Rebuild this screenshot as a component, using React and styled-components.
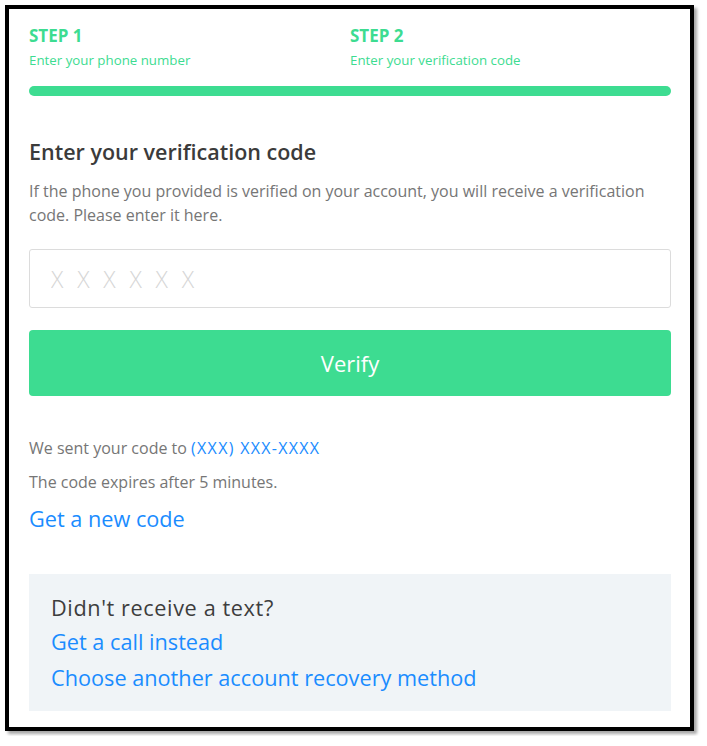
import React from "react";
import styled, { createGlobalStyle } from "styled-components";

const GlobalStyle = createGlobalStyle`
  * { box-sizing: border-box; }
  body {
    margin: 0;
    background: #fff;
    font-family: "Open Sans", Lato, sans-serif;
  }
`;

const Page = styled.div`
  padding: 5px;
`;

const Frame = styled.div`
  width: 689px;
  height: 726px;
  border: 4px solid #000;
  box-shadow: 3px 3px 3px rgba(0, 0, 0, 0.35);
  padding: 17px 19px 0 20px;
  background: #fff;
`;

const Steps = styled.div`
  display: grid;
  grid-template-columns: 1fr 1fr;
`;

const Step = styled.div`
  display: flex;
  flex-direction: column;
  gap: 5px;
`;

const StepTitle = styled.div`
  font-size: 17px;
  line-height: 20px;
  font-weight: 700;
  color: #3ddc91;
`;

const StepHint = styled.div`
  font-size: 13.3px;
  line-height: 18px;
  color: #3ddc91;
`;

const Progress = styled.div`
  margin-top: 17px;
  height: 10px;
  border-radius: 5px;
  background: #3ddc91;
`;

const Heading = styled.h2`
  margin: 43px 0 0;
  font-size: 21.5px;
  line-height: 26px;
  font-weight: 600;
  color: #3b3b3b;
`;

const Intro = styled.p`
  margin: 14px 0 0;
  font-size: 16px;
  line-height: 24px;
  color: #767676;
`;

const CodeInput = styled.input`
  display: block;
  width: 100%;
  height: 59px;
  margin-top: 22px;
  padding: 0 21px;
  border: 1px solid #dcdcdc;
  border-radius: 3px;
  font-family: inherit;
  font-size: 23px;
  font-weight: 300;
  letter-spacing: 3.9px;
  color: #333;
  outline: none;
  &::placeholder {
    color: #d6d6d6;
  }
`;

const VerifyButton = styled.button`
  display: block;
  width: 100%;
  height: 66px;
  margin-top: 22px;
  border: none;
  border-radius: 4px;
  background: #3ddc91;
  color: #fff;
  font-family: inherit;
  font-size: 22px;
  cursor: pointer;
`;

const Info = styled.p`
  margin: ${(p) => p.$top}px 0 0;
  font-size: 16px;
  line-height: 22px;
  color: #767676;
`;

const Link = styled.a`
  color: #1a8cff;
  text-decoration: none;
  cursor: pointer;
`;

const Phone = styled(Link)`
  letter-spacing: 1.3px;
`;

const BigLink = styled(Link)`
  display: block;
  margin-top: ${(p) => p.$top}px;
  font-size: 21.7px;
  line-height: 28px;
`;

const HelpBox = styled.div`
  margin-top: 41px;
  padding: 20px 22px 19px;
  background: #f0f4f7;
`;

const HelpTitle = styled.div`
  font-size: 21.7px;
  line-height: 28px;
  letter-spacing: 0.6px;
  color: #3d3d3d;
`;

export default function App() {
  return (
    <Page>
      <GlobalStyle />
      <Frame>
        <Steps>
          <Step>
            <StepTitle>STEP 1</StepTitle>
            <StepHint>Enter your phone number</StepHint>
          </Step>
          <Step>
            <StepTitle>STEP 2</StepTitle>
            <StepHint>Enter your verification code</StepHint>
          </Step>
        </Steps>
        <Progress />

        <Heading>Enter your verification code</Heading>
        <Intro>
          If the phone you provided is verified on your account, you will
          receive a verification code. Please enter it here.
        </Intro>
        <CodeInput placeholder="X X X X X X" />
        <VerifyButton>Verify</VerifyButton>

        <Info $top={41}>
          We sent your code to <Phone>(XXX) XXX-XXXX</Phone>
        </Info>
        <Info $top={12}>The code expires after 5 minutes.</Info>
        <BigLink $top={12}>Get a new code</BigLink>

        <HelpBox>
          <HelpTitle>Didn't receive a text?</HelpTitle>
          <BigLink $top={6}>Get a call instead</BigLink>
          <BigLink $top={8}>Choose another account recovery method</BigLink>
        </HelpBox>
      </Frame>
    </Page>
  );
}
